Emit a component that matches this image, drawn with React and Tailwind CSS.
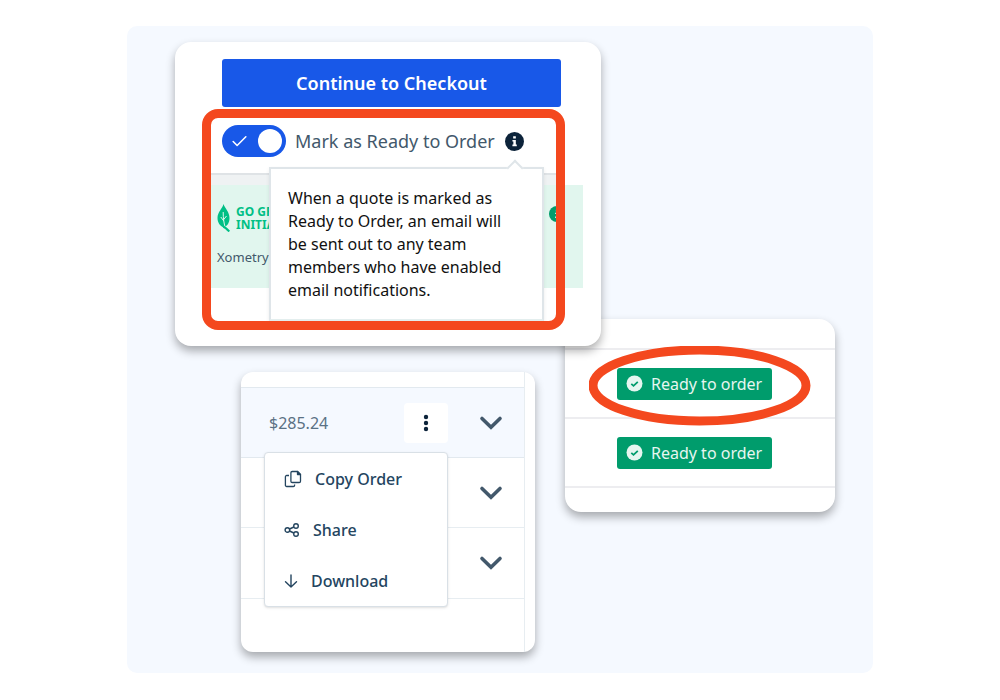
import React from 'react';
import { Check } from 'lucide-react';

const menuItems = [
  { label: 'Copy Order', icon: CopyIcon },
  { label: 'Share', icon: ShareIcon },
  { label: 'Download', icon: DownloadIcon },
];

function CopyIcon() {
  return (
    <svg className="h-[18px] w-[18px]" viewBox="0 0 18 18" fill="none" stroke="currentColor" strokeWidth="1.3" strokeLinejoin="round" aria-hidden="true">
      <path d="M8.2 1.5h5.300l3 3v6.700a1.300 1.300 0 0 1-1.300 1.300h-7a1.300 1.300 0 0 1-1.300-1.300V2.800a1.300 1.300 0 0 1 1.300-1.300z" />
      <path d="M13.500 1.500v3h3z" fill="currentColor" />
      <path d="M5 5.500H2.700a1.300 1.300 0 0 0-1.300 1.300v8.400a1.300 1.300 0 0 0 1.300 1.300h6.600a1.300 1.300 0 0 0 1.300-1.300v-.7" />
    </svg>
  );
}

function ShareIcon() {
  return (
    <svg className="h-4 w-4" viewBox="0 0 16 16" fill="none" stroke="currentColor" strokeWidth="1.4" aria-hidden="true">
      <circle cx="3.4" cy="8" r="2.3" />
      <circle cx="12" cy="4" r="2.3" />
      <circle cx="12" cy="12" r="2.3" />
      <path d="M5.6 7 9.8 5M5.6 9l4.2 2" />
    </svg>
  );
}

function DownloadIcon() {
  return (
    <svg className="h-[14px] w-[14px]" viewBox="0 0 14 14" fill="none" stroke="currentColor" strokeWidth="1.4" strokeLinecap="round" strokeLinejoin="round" aria-hidden="true">
      <path d="M7 1v12M1.500 7.800 7 13l5.500-5.200" />
    </svg>
  );
}

function LeafIcon() {
  return (
    <svg className="h-7 w-[14px] shrink-0" viewBox="0 0 14 28" aria-hidden="true">
      <path d="M6.500 0C5.500 4.500.5 8 .5 14c0 4.500 2.500 8 6 9.500 4-1.500 6-5 6-9.500C12.500 8 8 4.500 6.500 0z" fill="#00bf85" />
      <path d="M6.200 8c0 6 .6 11 2 15.500M3.800 13l3 4M9.500 12l-2.700 3.500" stroke="#e1f6ee" strokeWidth="1" fill="none" />
      <path d="M6.300 22.500c2 1 3.700 2.700 6 5" stroke="#00bf85" strokeWidth="2" fill="none" />
    </svg>
  );
}

function InfoIcon({ className }) {
  return (
    <svg className={className} viewBox="0 0 20 20" aria-hidden="true">
      <circle cx="10" cy="10" r="10" fill="currentColor" />
      <path d="M8.600 4.600h2.800v2.300H8.600zM7.800 8.300h3.600v4.900h1v1.700H7.800v-1.700h1V10h-1z" fill="#fff" />
    </svg>
  );
}

function CheckoutCard() {
  return (
    <section className="relative z-10 mt-4 ml-12 w-[426px] rounded-2xl bg-white pt-[17px] pb-4 shadow-[0_5px_10px_rgba(0,0,0,0.32)]">
      <div className="pr-10 pl-[47px]">
        <button type="button" className="block h-12 w-full rounded-[3px] bg-[#1858e8] text-lg font-semibold text-white">
          Continue to Checkout
        </button>
      </div>

      <div className="relative mt-[2px] mr-9 ml-[27px] h-[221px]">
        <div className="flex h-[66px] items-center border-b-2 border-[#dfe3e6] pl-5">
          <label className="flex items-center gap-[9px] text-lg text-[#42586b]">
            <input type="checkbox" defaultChecked className="peer sr-only" />
            <span className="flex h-8 w-16 items-center justify-between rounded-full bg-[#1858e8] pr-1 pl-2 text-white">
              <Check size={19} strokeWidth={2} />
              <span className="h-6 w-6 rounded-full bg-white" />
            </span>
            Mark as Ready to Order
          </label>
          <button type="button" aria-label="More information" className="ml-[10px] text-[#0c233a]">
            <InfoIcon className="h-[19px] w-[19px]" />
          </button>
        </div>

        <div className="h-[10px] bg-[#eff2f3]" />
        <div className="-mr-[18px] h-[103px] bg-[#e1f6ee] pt-[19px] pl-[15px]">
          <div className="flex items-center gap-[5px] text-xs leading-[13px] font-bold text-[#00bf85]">
            <LeafIcon />
            <p className="w-[33px] overflow-hidden whitespace-nowrap">GO GREEN<br />INITIATIVE</p>
            <InfoIcon className="mr-[18px] mb-2 ml-auto h-4 w-4 text-[#009c6c]" />
          </div>
          <p className="mt-[15px] text-[13px] leading-5 text-[#42586b]">Xometry</p>
        </div>

        {/* Tooltip under the info icon */}
        <div role="tooltip" className="absolute top-[58px] left-[67px] h-[154px] w-[275px] border-2 border-[#dfe5e9] border-b-[#e3eeee] bg-white px-[17px] pt-[18px] text-base leading-[23px] text-[#111] shadow-[0_2px_4px_rgba(0,0,0,0.08)]">
          <span className="absolute -top-[7px] left-[238px] h-3 w-3 rotate-45 border-t-2 border-l-2 border-[#dfe5e9] bg-white" />
          When a quote is marked as<br />Ready to Order, an email will<br />be sent out to any team<br />members who have enabled<br />email notifications.
        </div>

        {/* Red highlight */}
        <div className="pointer-events-none absolute inset-0 rounded-2xl border-[9px] border-[#f4481e]" />
      </div>
    </section>
  );
}

function OrderMenuCard() {
  return (
    <section className="relative mt-[26px] ml-[114px] w-[294px] rounded-xl bg-white pr-[10px] shadow-[0_5px_10px_rgba(0,0,0,0.32)]">
      <div className="border-r border-[#e7edf1] pt-[15px] pb-[53px]">
        <div className="flex h-[71px] items-center border-y border-[#e2e9ef] bg-[#f5f9ff] pr-[17px] pl-7">
          <span className="text-base text-[#5a7184]">$285.24</span>
          <button type="button" aria-label="Order actions" className="ml-auto flex h-10 w-11 items-center justify-center rounded bg-white text-[#0c233a]">
            <svg className="h-5 w-2" viewBox="0 0 8 20" fill="currentColor" aria-hidden="true">
              <circle cx="4" cy="4" r="2.200" />
              <circle cx="4" cy="10" r="2.200" />
              <circle cx="4" cy="16" r="2.200" />
            </svg>
          </button>
          <ExpandButton />
        </div>
        <div className="flex h-[70px] items-center justify-end border-b border-[#e7edf1] pr-[17px]"><ExpandButton /></div>
        <div className="flex h-[71px] items-center justify-end border-b border-[#e7edf1] pr-[17px]"><ExpandButton /></div>
      </div>

      <ul className="absolute top-20 left-[23px] w-[184px] rounded border border-[#d9e0e6] bg-white shadow-sm">
        {menuItems.map(({ label, icon: Icon }) => (
          <li key={label}>
            <button type="button" className="flex h-[51px] w-full items-center gap-[13px] pl-[19px] text-base font-medium text-[#24455f]">
              <Icon />
              {label}
            </button>
          </li>
        ))}
      </ul>
    </section>
  );
}

function ExpandButton() {
  return (
    <button type="button" aria-label="Expand order" className="ml-[27px] text-[#42586b]">
      <svg className="h-8 w-8" viewBox="0 0 32 32" fill="none" stroke="currentColor" strokeWidth="3.600" strokeLinecap="round" aria-hidden="true">
        <path d="m7 11.500 9 8.800 9-8.800" />
      </svg>
    </button>
  );
}

function ReadyBadge() {
  return (
    <span className="flex h-8 w-[155px] items-center gap-2 rounded-[3px] bg-[#009c6c] pl-[9px] text-base text-[#e6f6f0]">
      <svg className="h-[17px] w-[17px]" viewBox="0 0 17 17" aria-hidden="true">
        <circle cx="8.500" cy="8.500" r="8" fill="currentColor" />
        <path d="m5.300 8.800 2.200 2 4.300-4" fill="none" stroke="#009c6c" strokeWidth="1.800" />
      </svg>
      Ready to order
    </span>
  );
}

function ReadyOrdersCard() {
  return (
    <section className="-mt-[27px] ml-[30px] w-[270px] rounded-2xl bg-white pt-[29px] pb-6 shadow-[0_5px_10px_rgba(0,0,0,0.32)]">
      <div className="relative flex h-[69px] items-center border-t-2 border-[#ededf0] pl-[52px]">
        <ReadyBadge />
        <svg className="pointer-events-none absolute -top-1 left-6 h-20 w-[222px]" viewBox="0 0 222 80" fill="none" aria-hidden="true">
          <ellipse cx="110.500" cy="39.500" rx="106.500" ry="35.500" stroke="#f4481e" strokeWidth="9" />
        </svg>
      </div>
      <div className="flex h-[71px] items-center border-y-2 border-[#ededf0] pl-[52px]">
        <ReadyBadge />
      </div>
    </section>
  );
}

export default function App() {
  return (
    <main className="min-h-screen bg-white py-[26px] font-['Noto_Sans',sans-serif]">
      <div className="mx-auto flow-root max-w-[746px] rounded-[10px] bg-[#f5f9ff] pb-[21px]">
        <CheckoutCard />
        <div className="flex items-start">
          <OrderMenuCard />
          <ReadyOrdersCard />
        </div>
      </div>
    </main>
  );
}
